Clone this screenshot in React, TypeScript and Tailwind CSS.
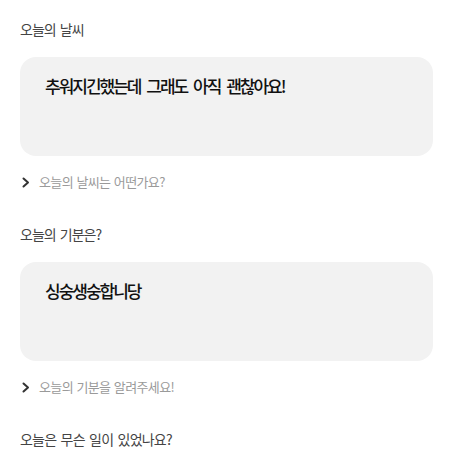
const font = { fontFamily: '"Noto Sans CJK KR", "Noto Sans", sans-serif' };

function Chevron() {
  return (
    <svg width="8" height="11" viewBox="0 0 8 11" fill="none" aria-hidden="true">
      <path d="M1.5 1.5L6 5.5L1.5 9.5" stroke="#333" strokeWidth="2" strokeLinecap="round" strokeLinejoin="round" />
    </svg>
  );
}

interface SectionProps {
  label: string;
  answer: string;
  hint: string;
}

function Section({ label, answer, hint }: SectionProps) {
  return (
    <section className="flex flex-col">
      <h2 className="text-[14px] leading-[20px] tracking-[-1px] [word-spacing:2px] text-[#444]">{label}</h2>
      <div className="mt-[18px] h-[99px] rounded-[16px] bg-[#f2f2f2] px-[25px] pt-[17px]">
        <p className="text-[17px] leading-[24px] font-medium tracking-[-2px] [word-spacing:4px] text-[#111]">{answer}</p>
      </div>
      <div className="mt-[17px] flex items-center gap-[9px] pl-[2px]">
        <Chevron />
        <span className="text-[13px] leading-[18px] tracking-[-0.6px] [word-spacing:1px] text-[#9a9a9a]">{hint}</span>
      </div>
    </section>
  );
}

export default function App() {
  return (
    <div className="min-h-screen bg-white px-[20px] pt-[19px] w-[453px]" style={font}>
      <div className="flex flex-col gap-[33px]">
        <Section label="오늘의 날씨" answer="추워지긴했는데 그래도 아직 괜찮아요!" hint="오늘의 날씨는 어떤가요?" />
        <Section label="오늘의 기분은?" answer="싱숭생숭합니당" hint="오늘의 기분을 알려주세요!" />
        <h2 className="text-[14px] leading-[20px] tracking-[-0.8px] [word-spacing:2px] text-[#444]">오늘은 무슨 일이 있었나요?</h2>
      </div>
    </div>
  );
}
